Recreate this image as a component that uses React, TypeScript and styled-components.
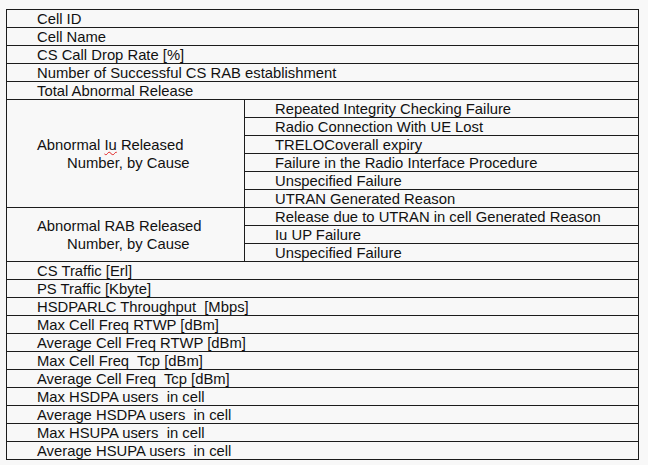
import React from 'react';
import styled, { createGlobalStyle } from 'styled-components';

const GlobalStyle = createGlobalStyle`
  html, body {
    margin: 0;
    padding: 0;
    background: #f8f8f8;
  }
`;

const Page = styled.div`
  padding: 9px 0 0 6px;
  font-family: 'Liberation Sans', Arial, sans-serif;
  font-size: 14.8px;
  color: #111;
`;

const Table = styled.table`
  border-collapse: collapse;
  width: 633px;
  table-layout: fixed;
`;

const Cell = styled.td`
  border: 1px solid #1c1c1c;
  padding: 1px 0 0 30px;
  height: 16px;
  line-height: 16px;
  white-space: pre;
  vertical-align: middle;
  text-align: left;
  overflow: hidden;
`;

const GroupCell = styled(Cell)`
  padding-top: 0;
  line-height: 18px;
`;

const GroupLine = styled.div<{ $indent?: boolean }>`
  padding-left: ${(p) => (p.$indent ? '30px' : '0')};
`;

// spell-check mark under "Iu"
const Squiggle = styled.span`
  text-decoration: underline wavy #e02020;
  text-decoration-thickness: 1px;
  text-underline-offset: 1px;
`;

const topRows = [
  'Cell ID',
  'Cell Name',
  'CS Call Drop Rate [%]',
  'Number of Successful CS RAB establishment',
  'Total Abnormal Release',
];

const iuCauses = [
  'Repeated Integrity Checking Failure',
  'Radio Connection With UE Lost',
  'TRELOCoverall expiry',
  'Failure in the Radio Interface Procedure',
  'Unspecified Failure',
  'UTRAN Generated Reason',
];

const rabCauses = [
  'Release due to UTRAN in cell Generated Reason',
  'Iu UP Failure',
  'Unspecified Failure',
];

const bottomRows = [
  'CS Traffic [Erl]',
  'PS Traffic [Kbyte]',
  'HSDPARLC Throughput  [Mbps]',
  'Max Cell Freq RTWP [dBm]',
  'Average Cell Freq RTWP [dBm]',
  'Max Cell Freq  Tcp [dBm]',
  'Average Cell Freq  Tcp [dBm]',
  'Max HSDPA users  in cell',
  'Average HSDPA users  in cell',
  'Max HSUPA users  in cell',
  'Average HSUPA users  in cell',
];

const App = () => {
  return (
    <Page>
      <GlobalStyle />
      <Table>
        <colgroup>
          <col style={{ width: 238 }} />
          <col />
        </colgroup>
        <tbody>
          {topRows.map((label) => (
            <tr key={label}>
              <Cell colSpan={2}>{label}</Cell>
            </tr>
          ))}
          {iuCauses.map((cause, i) => (
            <tr key={'iu' + i}>
              {i === 0 && (
                <GroupCell rowSpan={iuCauses.length}>
                  <GroupLine>
                    Abnormal <Squiggle>Iu</Squiggle> Released
                  </GroupLine>
                  <GroupLine $indent>Number, by Cause</GroupLine>
                </GroupCell>
              )}
              <Cell>{cause}</Cell>
            </tr>
          ))}
          {rabCauses.map((cause, i) => (
            <tr key={'rab' + i}>
              {i === 0 && (
                <GroupCell rowSpan={rabCauses.length}>
                  <GroupLine>Abnormal RAB Released</GroupLine>
                  <GroupLine $indent>Number, by Cause</GroupLine>
                </GroupCell>
              )}
              <Cell>{cause}</Cell>
            </tr>
          ))}
          {bottomRows.map((label) => (
            <tr key={label}>
              <Cell colSpan={2}>{label}</Cell>
            </tr>
          ))}
        </tbody>
      </Table>
    </Page>
  );
};

export default App;
